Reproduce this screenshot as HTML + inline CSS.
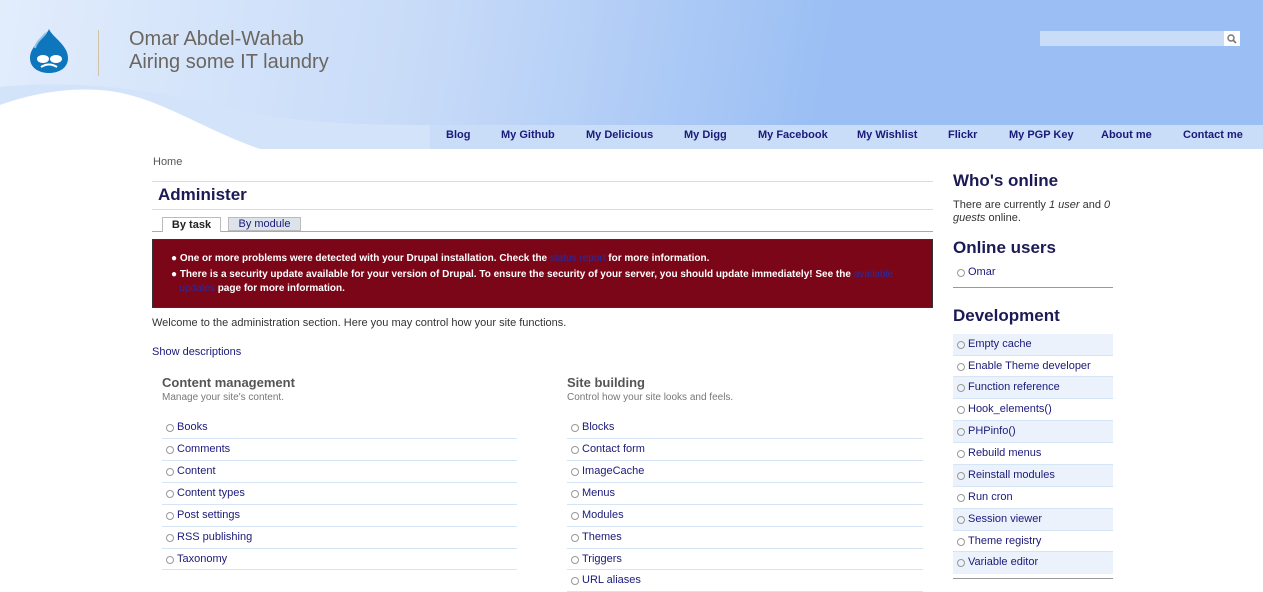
<!DOCTYPE html>
<html><head><meta charset="utf-8"><style>
*{margin:0;padding:0;box-sizing:border-box}
body{width:1263px;height:584px;overflow:hidden;background:#fff;font-family:"Liberation Sans",sans-serif;font-size:11px;color:#333;position:relative}
a{color:#1b1a7a;text-decoration:none}
.hdr{position:absolute;left:0;top:0;width:1263px;height:125px;background:linear-gradient(100deg,#e2edfc 0%,#c6daf8 35%,#9bbff4 65%,#9bbff4 100%)}
.nav{position:absolute;left:0;top:125px;width:1263px;height:24px}
.nav a{position:absolute;top:4px;font-weight:bold;font-size:11px;color:#1b1a7a}
.title{position:absolute;left:129px;top:28px;font-size:20px;line-height:23px;color:#6b6660}
.abs{position:absolute}
ul{list-style:none}
.list li{height:22px;border-bottom:1px solid #d6e5f5;padding-left:15px;line-height:21px;position:relative}
.list li:before{content:"";position:absolute;left:4px;top:7px;width:6px;height:6px;border:1px solid #999;border-radius:50%}
.dev li:nth-child(odd){background:#ebf2fb}
h2{color:#1b1a55;font-size:17px;font-weight:bold}
h3{color:#555;font-size:13px;font-weight:bold}
</style></head><body>
<div class="hdr"></div>
<svg class="abs" style="left:0;top:0" width="1263" height="150" viewBox="0 0 1263 150">
<rect x="0" y="125" width="1263" height="24" fill="#c9dcf8"/>
<path d="M0 87 C60 80 140 86 220 106 C280 121 340 125 430 125 L430 149 L0 149Z" fill="#d3e3fa"/>
<path d="M0 105 C30 94 70 86 110 91 C160 98 200 128 260 149 L0 149 Z" fill="#fff"/>
</svg>
<svg class="abs" style="left:28px;top:28px" width="42" height="46" viewBox="0 0 42 46">
<path d="M21 1 C24 9 40 17 40 30 C40 40 31 45 21 45 C11 45 2 40 2 30 C2 17 18 9 21 1Z" fill="#0e76bc"/>
<path d="M18 5 C14 10 8 14 7 20" stroke="#8cc4ea" stroke-width="2" fill="none"/>
<ellipse cx="15" cy="31" rx="6" ry="4" fill="#fff"/><ellipse cx="28" cy="31" rx="6" ry="4" fill="#fff"/>
<path d="M13 39 Q21 34 29 39" stroke="#fff" stroke-width="2" fill="none"/>
</svg>
<div class="abs" style="left:98px;top:30px;width:1px;height:46px;background:#cfc3a8"></div>
<div class="title">Omar Abdel-Wahab<br>Airing some IT laundry</div>
<div class="abs" style="left:1040px;top:31px;width:184px;height:15px;background:#c9dcf8"></div>
<svg class="abs" style="left:1224px;top:31px" width="16" height="15"><rect width="16" height="15" fill="#fff"/><circle cx="7" cy="7" r="3" stroke="#777" stroke-width="1.4" fill="none"/><path d="M9 9 L12 12" stroke="#777" stroke-width="1.6"/></svg>
<div class="nav">
<a style="left:446px">Blog</a><a style="left:501px">My Github</a><a style="left:586px">My Delicious</a><a style="left:684px">My Digg</a><a style="left:758px">My Facebook</a><a style="left:857px">My Wishlist</a><a style="left:948px">Flickr</a><a style="left:1009px">My PGP Key</a><a style="left:1101px">About me</a><a style="left:1183px">Contact me</a>
</div>
<div class="abs" style="left:153px;top:156px;color:#555">Home</div>
<div class="abs" style="left:152px;top:181px;width:781px;height:1px;background:#d0dff2"></div>
<div class="abs" style="left:158px;top:185px;font-size:17px;font-weight:bold;color:#1b1a55">Administer</div>
<div class="abs" style="left:152px;top:209px;width:781px;height:1px;background:#d0dff2"></div>
<div class="abs" style="left:152px;top:231px;width:781px;height:1px;background:#aaa"></div>
<div class="abs" style="left:162px;top:217px;width:59px;height:15px;background:#fff;border:1px solid #bbb;border-bottom:none;text-align:center;font-weight:bold;color:#222;line-height:14px">By task</div>
<div class="abs" style="left:228px;top:217px;width:73px;height:14px;background:#dde3ea;border:1px solid #bbb;text-align:center;color:#1b1a7a;line-height:13px">By module</div>
<div class="abs" style="left:152px;top:239px;width:781px;height:69px;background:#7b0618;border:1px solid #333;color:#fff;font-weight:bold;font-size:10px;padding:12px 0 0 18px;line-height:14.5px">
<div style="margin-bottom:1px">&#9679; One or more problems were detected with your Drupal installation. Check the <span style="color:#2a2aa0;font-weight:normal">status report</span> for more information.</div>
<div>&#9679; There is a security update available for your version of Drupal. To ensure the security of your server, you should update immediately! See the <span style="color:#2a2aa0;font-weight:normal">available<br>&nbsp;&nbsp;&nbsp;updates</span> page for more information.</div>
</div>
<div class="abs" style="left:152px;top:317px">Welcome to the administration section. Here you may control how your site functions.</div>
<a class="abs" style="left:152px;top:346px">Show descriptions</a>
<h3 class="abs" style="left:162px;top:375px">Content management</h3>
<div class="abs" style="left:162px;top:392px;color:#777;font-size:10px">Manage your site's content.</div>
<ul class="list abs" style="left:162px;top:417px;width:355px">
<li><a>Books</a></li><li><a>Comments</a></li><li><a>Content</a></li><li><a>Content types</a></li><li><a>Post settings</a></li><li><a>RSS publishing</a></li><li style="height:21px"><a>Taxonomy</a></li></ul>
<h3 class="abs" style="left:567px;top:375px">Site building</h3>
<div class="abs" style="left:567px;top:392px;color:#777;font-size:10px">Control how your site looks and feels.</div>
<ul class="list abs" style="left:567px;top:417px;width:356px">
<li><a>Blocks</a></li><li><a>Contact form</a></li><li><a>ImageCache</a></li><li><a>Menus</a></li><li><a>Modules</a></li><li><a>Themes</a></li><li style="height:21px"><a>Triggers</a></li><li><a>URL aliases</a></li></ul>
<h2 class="abs" style="left:953px;top:171px">Who's online</h2>
<div class="abs" style="left:953px;top:199px;width:165px;line-height:13px">There are currently <i>1 user</i> and <i>0 guests</i> online.</div>
<h2 class="abs" style="left:953px;top:238px">Online users</h2>
<ul class="list abs" style="left:953px;top:262px;width:160px"><li style="border-bottom:1px solid #999;height:26px"><a>Omar</a></li></ul>
<h2 class="abs" style="left:953px;top:306px">Development</h2>
<ul class="list dev abs" style="left:953px;top:334px;width:160px">
<li><a>Empty cache</a></li><li style="height:21px"><a>Enable Theme developer</a></li><li><a>Function reference</a></li><li><a>Hook_elements()</a></li><li><a>PHPinfo()</a></li><li><a>Rebuild menus</a></li><li><a>Reinstall modules</a></li><li><a>Run cron</a></li><li><a>Session viewer</a></li><li style="height:21px"><a>Theme registry</a></li><li style="border-bottom:none"><a>Variable editor</a></li></ul>
<div class="abs" style="left:953px;top:578px;width:160px;height:1px;background:#999"></div>
</body></html>
